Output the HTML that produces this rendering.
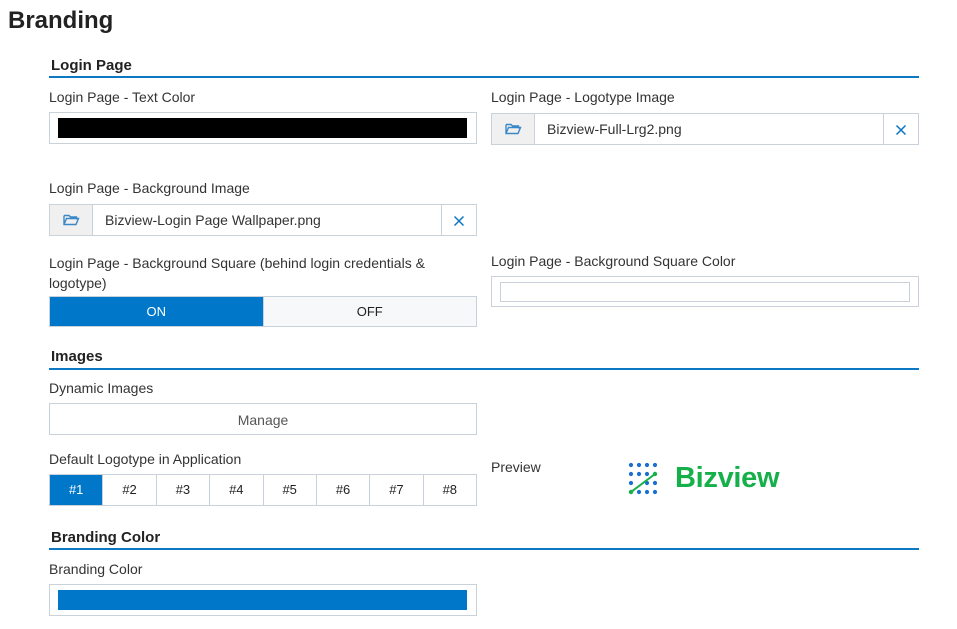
<!DOCTYPE html>
<html><head><style>
body{margin:0;width:957px;height:629px;background:#fff;font-family:"Liberation Sans",sans-serif;color:#333;position:relative;overflow:hidden}
.a{position:absolute}
.t{font-size:14px;color:#333;white-space:nowrap}
.h{font-size:15px;font-weight:bold;color:#222}
.line{height:2px;background:#0a78c4;left:49px;width:870px}
.box{border:1px solid #c9d1da;box-sizing:border-box;background:#fff}
.ic{background:#f0f0f0;border-right:1px solid #c9d1da;box-sizing:border-box}
.x{border:1px solid #c9d1da;box-sizing:border-box;background:#fff}
.seg{display:flex;border:1px solid #c9d1da;box-sizing:border-box}
.seg div{flex:1;text-align:center;font-size:13px;border-left:1px solid #c9d1da;color:#222;line-height:30px}
.seg div:first-child{border-left:none}
.on{background:#0077c8;color:#fff!important}
</style></head><body>
<div class="a" style="left:8px;top:7px;font-size:24px;font-weight:bold;color:#222">Branding</div>

<div class="a h" style="left:51px;top:57px">Login Page</div>
<div class="a line" style="top:76px"></div>

<div class="a t" style="left:49px;top:89px">Login Page - Text Color</div>
<div class="a box" style="left:49px;top:112px;width:428px;height:32px"></div>
<div class="a" style="left:58px;top:118px;width:409px;height:20px;background:#000"></div>

<div class="a t" style="left:491px;top:89px">Login Page - Logotype Image</div>
<div class="a box" style="left:491px;top:113px;width:394px;height:32px"></div>
<div class="a ic" style="left:492px;top:114px;width:43px;height:30px"><svg width="43" height="30"><path d="M14 10.5h5l1.5 1.5h6v2.5M14 10.5v9h12l2.5-6h-12l-2.5 6" fill="none" stroke="#3a88c8" stroke-width="1.4"/></svg></div>
<div class="a t" style="left:547px;top:121px">Bizview-Full-Lrg2.png</div>
<div class="a x" style="left:883px;top:113px;width:36px;height:32px"><svg width="34" height="30"><path d="M12.5 11.5l9 9M21.5 11.5l-9 9" stroke="#0a78c4" stroke-width="1.5"/></svg></div>

<div class="a t" style="left:49px;top:180px">Login Page - Background Image</div>
<div class="a box" style="left:49px;top:204px;width:394px;height:32px"></div>
<div class="a ic" style="left:50px;top:205px;width:43px;height:30px"><svg width="43" height="30"><path d="M14 10.5h5l1.5 1.5h6v2.5M14 10.5v9h12l2.5-6h-12l-2.5 6" fill="none" stroke="#3a88c8" stroke-width="1.4"/></svg></div>
<div class="a t" style="left:105px;top:212px">Bizview-Login Page Wallpaper.png</div>
<div class="a x" style="left:441px;top:204px;width:36px;height:32px"><svg width="34" height="30"><path d="M12.5 11.5l9 9M21.5 11.5l-9 9" stroke="#0a78c4" stroke-width="1.5"/></svg></div>

<div class="a t" style="left:49px;top:253px;line-height:20px">Login Page - Background Square (behind login credentials &amp;<br>logotype)</div>
<div class="a seg" style="left:49px;top:296px;width:428px;height:31px"><div class="on">ON</div><div style="background:#f6f8fa">OFF</div></div>

<div class="a t" style="left:491px;top:253px">Login Page - Background Square Color</div>
<div class="a box" style="left:491px;top:276px;width:428px;height:31px"></div>
<div class="a box" style="left:500px;top:282px;width:410px;height:20px"></div>

<div class="a h" style="left:51px;top:348px">Images</div>
<div class="a line" style="top:368px"></div>

<div class="a t" style="left:49px;top:380px">Dynamic Images</div>
<div class="a box" style="left:49px;top:403px;width:428px;height:32px;text-align:center;line-height:32px;font-size:14px;color:#555">Manage</div>

<div class="a t" style="left:49px;top:451px">Default Logotype in Application</div>
<div class="a seg" style="left:49px;top:474px;width:428px;height:32px"><div class="on">#1</div><div>#2</div><div>#3</div><div>#4</div><div>#5</div><div>#6</div><div>#7</div><div>#8</div></div>

<div class="a t" style="left:491px;top:459px">Preview</div>
<svg class="a" style="left:628px;top:462px" width="34" height="34">
<g fill="#1a6fd0">
<circle cx="3" cy="3" r="2.1"/><circle cx="11" cy="3" r="2.1"/><circle cx="19" cy="3" r="2.1"/><circle cx="27" cy="3" r="2.1"/>
<circle cx="3" cy="12" r="2.1"/><circle cx="11" cy="12" r="2.1"/><circle cx="19" cy="12" r="2.1"/>
<circle cx="3" cy="21" r="2.1"/><circle cx="19" cy="21" r="2.1"/><circle cx="27" cy="21" r="2.1"/>
<circle cx="11" cy="30" r="2.1"/><circle cx="19" cy="30" r="2.1"/><circle cx="27" cy="30" r="2.1"/>
</g>
<path d="M3 30L27 12" stroke="#16b04a" stroke-width="2"/><circle cx="3" cy="30" r="2.2" fill="#16b04a"/><circle cx="27" cy="12" r="2.2" fill="#16b04a"/>
</svg>
<div class="a" style="left:675px;top:462px;font-size:29px;font-weight:bold;color:#16b04a;letter-spacing:-0.3px">Bizview</div>

<div class="a h" style="left:51px;top:529px">Branding Color</div>
<div class="a line" style="top:548px"></div>

<div class="a t" style="left:49px;top:561px">Branding Color</div>
<div class="a box" style="left:49px;top:584px;width:428px;height:32px"></div>
<div class="a" style="left:58px;top:590px;width:409px;height:20px;background:#0077c8"></div>
</body></html>
